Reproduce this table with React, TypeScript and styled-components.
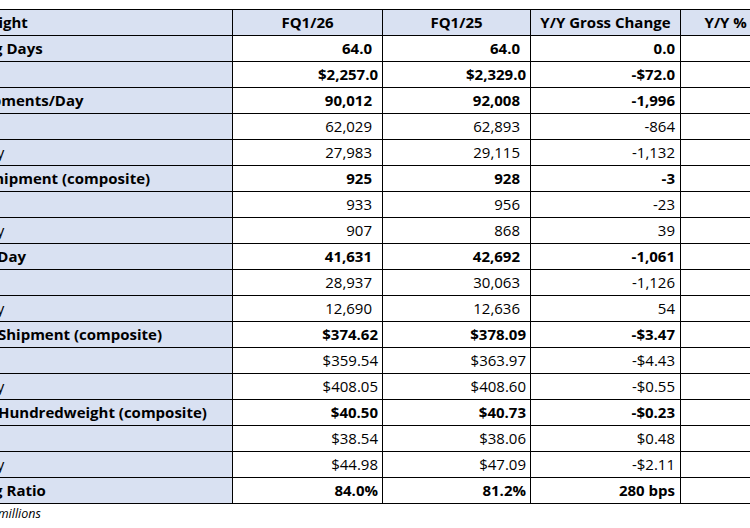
import React from "react";
import styled, { createGlobalStyle } from "styled-components";

const Global = createGlobalStyle`
  html, body { margin: 0; padding: 0; background: #ffffff; }
  body { overflow: hidden; width: 750px; height: 528px; }
`;

const Page = styled.div`
  padding-top: 9px;
  margin-left: -79px;
  font-family: "Open Sans", "Liberation Sans", sans-serif;
  color: #000;
`;

const Table = styled.table`
  border-collapse: collapse;
  table-layout: fixed;
  width: 909px;
  font-size: 15px;
`;

const Cell = styled.td`
  height: 25px;
  padding: 0;
  border: 1px solid #000;
  white-space: nowrap;
  overflow: hidden;
  line-height: 25px;
`;

const HeadCell = styled(Cell).attrs({ as: "th" })`
  background: #d9e1f2;
  font-weight: 700;
  text-align: center;
`;

const HeadLabel = styled(HeadCell)`
  text-align: left;
  padding-left: 5px;
`;

const LabelCell = styled(Cell)<{ $sub?: boolean }>`
  background: #d9e1f2;
  text-align: left;
  font-weight: ${(p) => (p.$sub ? 400 : 700)};
  padding-left: ${(p) => (p.$sub ? "18px" : "5px")};
`;

type Fmt = "num" | "cur" | "chg";

const NumCell = styled(Cell)<{ $bold?: boolean; $fmt: Fmt }>`
  background: #fff;
  text-align: right;
  font-weight: ${(p) => (p.$bold ? 700 : 400)};
  padding-right: ${(p) =>
    p.$fmt === "chg" ? "5px" : p.$fmt === "cur" ? "4px" : "10px"};
`;

const EmptyCell = styled(Cell)`
  background: #fff;
`;

const Note = styled.div`
  font-style: italic;
  font-size: 12.5px;
  line-height: 16px;
  padding-top: 2px;
  padding-left: 7px;
`;

type Row = {
  label: string;
  sub?: boolean;
  a: string;
  b: string;
  c: string;
  fmt: Fmt;
};

const rows: Row[] = [
  { label: "Operating Days", a: "64.0", b: "64.0", c: "0.0", fmt: "num" },
  { label: "Revenue*", a: "$2,257.0", b: "$2,329.0", c: "-$72.0", fmt: "cur" },
  { label: "Total Shipments/Day", a: "90,012", b: "92,008", c: "-1,996", fmt: "num" },
  { label: "Priority", sub: true, a: "62,029", b: "62,893", c: "-864", fmt: "num" },
  { label: "Economy", sub: true, a: "27,983", b: "29,115", c: "-1,132", fmt: "num" },
  { label: "Weight/Shipment (composite)", a: "925", b: "928", c: "-3", fmt: "num" },
  { label: "Priority", sub: true, a: "933", b: "956", c: "-23", fmt: "num" },
  { label: "Economy", sub: true, a: "907", b: "868", c: "39", fmt: "num" },
  { label: "Tonnage/Day", a: "41,631", b: "42,692", c: "-1,061", fmt: "num" },
  { label: "Priority", sub: true, a: "28,937", b: "30,063", c: "-1,126", fmt: "num" },
  { label: "Economy", sub: true, a: "12,690", b: "12,636", c: "54", fmt: "num" },
  { label: "Revenue/Shipment (composite)", a: "$374.62", b: "$378.09", c: "-$3.47", fmt: "cur" },
  { label: "Priority", sub: true, a: "$359.54", b: "$363.97", c: "-$4.43", fmt: "cur" },
  { label: "Economy", sub: true, a: "$408.05", b: "$408.60", c: "-$0.55", fmt: "cur" },
  { label: "Revenue/Hundredweight (composite)", a: "$40.50", b: "$40.73", c: "-$0.23", fmt: "cur" },
  { label: "Priority", sub: true, a: "$38.54", b: "$38.06", c: "$0.48", fmt: "cur" },
  { label: "Economy", sub: true, a: "$44.98", b: "$47.09", c: "-$2.11", fmt: "cur" },
  { label: "Operating Ratio", a: "84.0%", b: "81.2%", c: "280 bps", fmt: "cur" },
];

export default function App() {
  return (
    <>
      <Global />
      <Page>
        <Table>
          <colgroup>
            <col style={{ width: 311 }} />
            <col style={{ width: 150 }} />
            <col style={{ width: 148 }} />
            <col style={{ width: 150 }} />
            <col style={{ width: 150 }} />
          </colgroup>
          <thead>
            <tr>
              <HeadLabel>FedEx Freight</HeadLabel>
              <HeadCell>FQ1/26</HeadCell>
              <HeadCell>FQ1/25</HeadCell>
              <HeadCell>Y/Y Gross Change</HeadCell>
              <HeadCell>Y/Y % Change</HeadCell>
            </tr>
          </thead>
          <tbody>
            {rows.map((r, i) => (
              <tr key={i}>
                <LabelCell $sub={r.sub}>{r.label}</LabelCell>
                <NumCell $bold={!r.sub} $fmt={r.fmt}>{r.a}</NumCell>
                <NumCell $bold={!r.sub} $fmt={r.fmt}>{r.b}</NumCell>
                <NumCell $bold={!r.sub} $fmt="chg">{r.c}</NumCell>
                <EmptyCell />
              </tr>
            ))}
          </tbody>
        </Table>
        <Note>*Revenue in millions</Note>
      </Page>
    </>
  );
}
